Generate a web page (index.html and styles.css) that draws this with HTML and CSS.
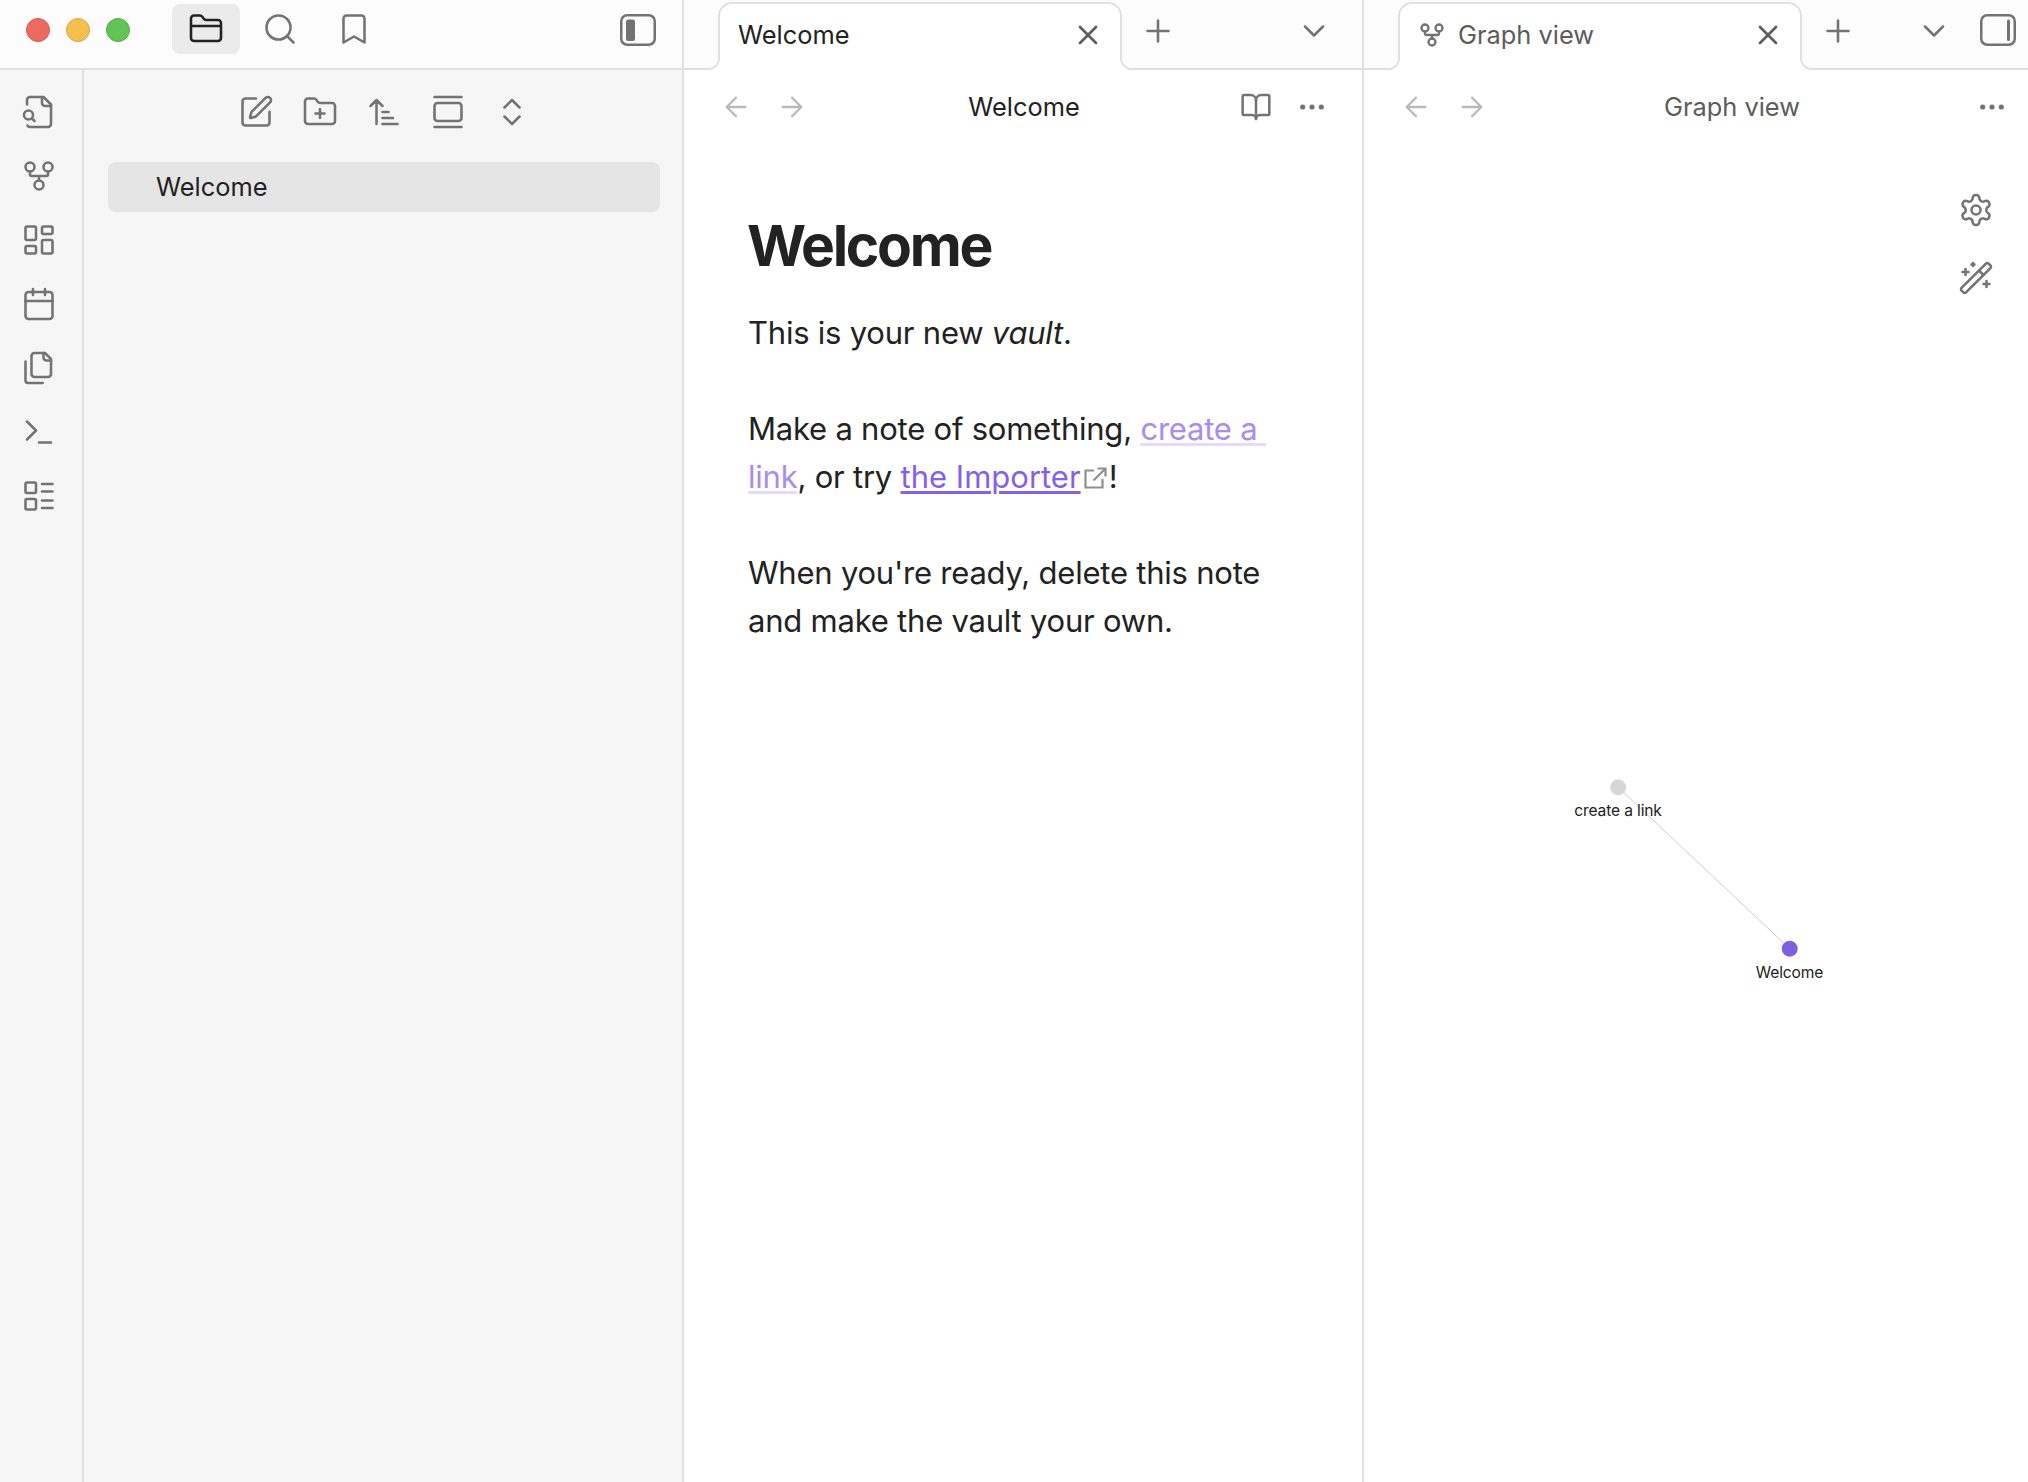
FILE: index.html
```html
<!DOCTYPE html>
<html lang="en">
<head>
    <meta charset="UTF-8">
    <title>Welcome</title>
    <link rel="stylesheet" href="styles.css">
</head>
<body>
<svg class="sprite">
    <symbol id="fork" viewBox="0 0 24 24"><circle cx="12" cy="18" r="3"/><circle cx="6" cy="6" r="3"/><circle cx="18" cy="6" r="3"/><path d="M18 9v2c0 .6-.4 1-1 1H7c-.6 0-1-.4-1-1V9M12 12v3"/></symbol>
    <symbol id="close" viewBox="0 0 24 24"><path d="M18 6 6 18M6 6l12 12"/></symbol>
    <symbol id="plus" viewBox="0 0 24 24"><path d="M5 12h14M12 5v14"/></symbol>
    <symbol id="down" viewBox="0 0 24 24"><path d="m6 9 6 6 6-6"/></symbol>
    <symbol id="back" viewBox="0 0 24 24"><path d="m12 19-7-7 7-7M19 12H5"/></symbol>
    <symbol id="forward" viewBox="0 0 24 24"><path d="M5 12h14M12 5l7 7-7 7"/></symbol>
    <symbol id="more" viewBox="0 0 24 24"><circle cx="12" cy="12" r="1"/><circle cx="19" cy="12" r="1"/><circle cx="5" cy="12" r="1"/></symbol>
</svg>

<div class="app">
    <div class="left">
        <div class="topbar">
            <div class="lights">
                <span class="light red"></span>
                <span class="light yellow"></span>
                <span class="light green"></span>
            </div>
            <div class="side-tabs">
                <div class="side-tab active">
                    <svg class="icon" viewBox="0 0 24 24"><path d="M20 20a2 2 0 0 0 2-2V8a2 2 0 0 0-2-2h-7.9a2 2 0 0 1-1.69-.9L9.6 3.9A2 2 0 0 0 7.93 3H4a2 2 0 0 0-2 2v13a2 2 0 0 0 2 2ZM2 10h20"/></svg>
                </div>
                <div class="side-tab">
                    <svg class="icon" viewBox="0 0 24 24"><circle cx="11" cy="11" r="8"/><path d="m21 21-4.3-4.3"/></svg>
                </div>
                <div class="side-tab">
                    <svg class="icon" viewBox="0 0 24 24"><path d="m19 21-7-4-7 4V5a2 2 0 0 1 2-2h10a2 2 0 0 1 2 2v16z"/></svg>
                </div>
            </div>
            <svg class="toggle" viewBox="0 0 36 32"><rect x="1.25" y="1.25" width="33.5" height="29.5" rx="6"/><rect class="fill" x="6" y="5.5" width="9" height="21.5" rx="2.5"/></svg>
        </div>
        <div class="left-body">
            <div class="ribbon">
                <svg class="icon" viewBox="0 0 24 24"><path d="M14 2v4a2 2 0 0 0 2 2h4"/><path d="M4.268 21a2 2 0 0 0 1.727 1H18a2 2 0 0 0 2-2V7l-5-5H6a2 2 0 0 0-2 2v3"/><path d="m9 18-1.5-1.5"/><circle cx="5" cy="14" r="3"/></svg>
                <svg class="icon"><use href="#fork"/></svg>
                <svg class="icon" viewBox="0 0 24 24"><rect width="7" height="9" x="3" y="3" rx="1"/><rect width="7" height="5" x="14" y="3" rx="1"/><rect width="7" height="9" x="14" y="12" rx="1"/><rect width="7" height="5" x="3" y="16" rx="1"/></svg>
                <svg class="icon" viewBox="0 0 24 24"><path d="M8 2v4M16 2v4M3 10h18"/><rect width="18" height="18" x="3" y="4" rx="2"/></svg>
                <svg class="icon" viewBox="0 0 24 24"><path d="M20 7h-3a2 2 0 0 1-2-2V2"/><path d="M9 18a2 2 0 0 1-2-2V4a2 2 0 0 1 2-2h7l4 4v10a2 2 0 0 1-2 2Z"/><path d="M3 7.6v12.8A1.6 1.6 0 0 0 4.6 22h9.8"/></svg>
                <svg class="icon" viewBox="0 0 24 24"><path d="m4 17 6-6-6-6M12 19h8"/></svg>
                <svg class="icon" viewBox="0 0 24 24"><rect width="7" height="7" x="3" y="3" rx="1"/><rect width="7" height="7" x="3" y="14" rx="1"/><path d="M14 4h7M14 9h7M14 15h7M14 20h7"/></svg>
            </div>
            <div class="explorer">
                <div class="tools">
                    <svg class="icon" viewBox="0 0 24 24"><path d="M12 3H5a2 2 0 0 0-2 2v14a2 2 0 0 0 2 2h14a2 2 0 0 0 2-2v-7"/><path d="M18.375 2.625a1 1 0 0 1 3 3l-9.013 9.014a2 2 0 0 1-.853.505l-2.873.84a.5.5 0 0 1-.62-.62l.84-2.873a2 2 0 0 1 .506-.852z"/></svg>
                    <svg class="icon" viewBox="0 0 24 24"><path d="M12 10v6M9 13h6"/><path d="M20 20a2 2 0 0 0 2-2V8a2 2 0 0 0-2-2h-7.9a2 2 0 0 1-1.69-.9L9.6 3.9A2 2 0 0 0 7.93 3H4a2 2 0 0 0-2 2v13a2 2 0 0 0 2 2Z"/></svg>
                    <svg class="icon" viewBox="0 0 24 24"><path d="m3 8 4-4 4 4M7 4v16M11 12h4M11 16h7M11 20h10"/></svg>
                    <svg class="icon" viewBox="0 0 24 24"><path d="M3 2h18M3 22h18"/><rect width="18" height="12" x="3" y="6" rx="2"/></svg>
                    <svg class="icon" viewBox="0 0 24 24"><path d="m7 15 5 5 5-5M7 9l5-5 5 5"/></svg>
                </div>
                <div class="file">Welcome</div>
            </div>
        </div>
    </div>

    <div class="pane">
        <div class="tabbar">
            <div class="tab">
                <span>Welcome</span>
                <svg class="icon small close"><use href="#close"/></svg>
            </div>
            <svg class="icon add"><use href="#plus"/></svg>
            <svg class="icon list"><use href="#down"/></svg>
        </div>
        <div class="view-header">
            <div class="nav">
                <svg class="icon small"><use href="#back"/></svg>
                <svg class="icon small"><use href="#forward"/></svg>
            </div>
            <div class="view-title">Welcome</div>
            <div class="actions">
                <svg class="icon small" viewBox="0 0 24 24"><path d="M12 7v14"/><path d="M3 18a1 1 0 0 1-1-1V4a1 1 0 0 1 1-1h5a4 4 0 0 1 4 4 4 4 0 0 1 4-4h5a1 1 0 0 1 1 1v13a1 1 0 0 1-1 1h-6a3 3 0 0 0-3 3 3 3 0 0 0-3-3z"/></svg>
                <svg class="icon small"><use href="#more"/></svg>
            </div>
        </div>
        <div class="note">
            <h1>Welcome</h1>
            <p>This is your new <em>vault</em>.</p>
            <p>Make a note of something, <a class="unresolved">create a link</a>, or try <a class="external">the Importer</a><svg class="ext" viewBox="0 0 24 24"><path d="M11 4.5H2.5v17h17V13M14.5 2.5h8v8M22 3 10.5 14.5"/></svg>!</p>
            <p>When you're ready, delete this note and make the vault your own.</p>
        </div>
    </div>

    <div class="pane graph">
        <div class="tabbar">
            <div class="tab">
                <svg class="icon tiny"><use href="#fork"/></svg>
                <span>Graph view</span>
                <svg class="icon small close"><use href="#close"/></svg>
            </div>
            <svg class="icon add"><use href="#plus"/></svg>
            <svg class="icon list"><use href="#down"/></svg>
            <svg class="toggle" viewBox="0 0 36 32"><rect x="1.25" y="1.25" width="33.5" height="29.5" rx="6"/><rect class="fill" x="27" y="5.5" width="3" height="21.5" rx="1.5"/></svg>
        </div>
        <div class="view-header">
            <div class="nav">
                <svg class="icon small"><use href="#back"/></svg>
                <svg class="icon small"><use href="#forward"/></svg>
            </div>
            <div class="view-title">Graph view</div>
            <div class="actions">
                <svg class="icon small"><use href="#more"/></svg>
            </div>
        </div>
        <div class="canvas">
            <svg class="nodes" width="664" height="1338">
                <line x1="254.2" y1="643.3" x2="425.7" y2="804.7"/>
                <circle class="ghost" cx="254.2" cy="643.3" r="8"/>
                <circle class="current" cx="425.7" cy="804.7" r="8"/>
                <text x="254" y="672">create a link</text>
                <text x="425.5" y="834">Welcome</text>
            </svg>
            <div class="controls">
                <svg class="icon" viewBox="0 0 24 24"><path d="M12.22 2h-.44a2 2 0 0 0-2 2v.18a2 2 0 0 1-1 1.73l-.43.25a2 2 0 0 1-2 0l-.15-.08a2 2 0 0 0-2.73.73l-.22.38a2 2 0 0 0 .73 2.73l.15.1a2 2 0 0 1 1 1.72v.51a2 2 0 0 1-1 1.74l-.15.09a2 2 0 0 0-.73 2.73l.22.38a2 2 0 0 0 2.73.73l.15-.08a2 2 0 0 1 2 0l.43.25a2 2 0 0 1 1 1.73V20a2 2 0 0 0 2 2h.44a2 2 0 0 0 2-2v-.18a2 2 0 0 1 1-1.73l.43-.25a2 2 0 0 1 2 0l.15.08a2 2 0 0 0 2.73-.73l.22-.39a2 2 0 0 0-.73-2.73l-.15-.08a2 2 0 0 1-1-1.74v-.5a2 2 0 0 1 1-1.74l.15-.09a2 2 0 0 0 .73-2.73l-.22-.38a2 2 0 0 0-2.73-.73l-.15.08a2 2 0 0 1-2 0l-.43-.25a2 2 0 0 1-1-1.73V4a2 2 0 0 0-2-2z"/><circle cx="12" cy="12" r="3"/></svg>
                <svg class="icon" viewBox="0 0 24 24"><path d="m21.64 3.64-1.28-1.28a1.21 1.21 0 0 0-1.72 0L2.36 18.64a1.21 1.21 0 0 0 0 1.72l1.28 1.28a1.2 1.2 0 0 0 1.72 0L21.64 5.36a1.2 1.2 0 0 0 0-1.72"/><path d="m14 7 3 3M5 6v4M19 14v4M10 2v2M7 8H3M21 16h-4M11 3H9"/></svg>
            </div>
        </div>
    </div>
</div>
</body>
</html>
```

FILE: styles.css
```css
*{
    box-sizing: border-box;
}
body{
    margin: 0;
    background: #fff;
    color: #222;
    font-family: Inter, "Liberation Sans", sans-serif;
    font-size: 25.4px;
    line-height: 30px;
    overflow: hidden;
}
.sprite{
    display: none;
}
.app{
    display: flex;
    height: 100vh;
}

/* icons */
.icon{
    width: 36px;
    height: 36px;
    flex: none;
    fill: none;
    stroke: #737373;
    stroke-width: 1.7;
    stroke-linecap: round;
    stroke-linejoin: round;
}
.icon.small{
    width: 32px;
    height: 32px;
}
.icon.tiny{
    width: 28px;
    height: 28px;
    stroke-width: 2;
}
.icon.close{
    stroke: #5c5c5c;
    stroke-width: 2;
}
.toggle{
    width: 36px;
    height: 32px;
    flex: none;
    fill: none;
    stroke: #737373;
    stroke-width: 2.5;
}
.toggle .fill{
    fill: #737373;
    stroke: none;
}

/* left sidebar */
.left{
    width: 684px;
    flex: none;
    display: flex;
    flex-direction: column;
    background: #f6f6f6;
    border-right: 2px solid #e0e0e0;
}
.topbar{
    height: 70px;
    flex: none;
    display: flex;
    align-items: flex-start;
    padding: 4px 26px 0;
    background: #fcfcfc;
    border-bottom: 2px solid #e0e0e0;
}
.lights{
    display: flex;
    gap: 16px;
    padding-top: 14px;
}
.light{
    width: 24px;
    height: 24px;
    border-radius: 50%;
    border: 1px solid;
}
.red{
    background: #ed6a5e;
    border-color: #d95950;
}
.yellow{
    background: #f5bf4f;
    border-color: #dba73f;
}
.green{
    background: #61c554;
    border-color: #52ae42;
}
.side-tabs{
    display: flex;
    gap: 6px;
    margin-left: 42px;
}
.side-tab{
    width: 68px;
    height: 50px;
    display: flex;
    align-items: center;
    justify-content: center;
    border-radius: 8px;
}
.side-tab.active{
    background: #ebebeb;
}
.side-tab.active .icon{
    stroke: #222;
}
.topbar .toggle{
    margin: 10px 0 0 auto;
}
.left-body{
    flex: 1;
    display: flex;
}
.ribbon{
    width: 84px;
    display: flex;
    flex-direction: column;
    gap: 28px;
    padding: 24px 0 0 21px;
    border-right: 2px solid #e0e0e0;
}
.explorer{
    flex: 1;
    padding: 24px 22px 0 24px;
}
.tools{
    display: flex;
    gap: 28px;
    padding-left: 130px;
}
.file{
    height: 50px;
    margin-top: 32px;
    padding-left: 48px;
    border-radius: 8px;
    background: #e5e5e5;
    line-height: 50px;
}

/* panes */
.pane{
    width: 680px;
    flex: none;
    display: flex;
    flex-direction: column;
    border-right: 2px solid #e0e0e0;
}
.tabbar{
    height: 70px;
    flex: none;
    display: flex;
    padding: 2px 30px 0 34px;
    background: #fcfcfc;
    border-bottom: 2px solid #e0e0e0;
}
.tab{
    position: relative;
    width: 404px;
    height: 68px;
    display: flex;
    align-items: center;
    padding: 0 16px 4px 18px;
    background: #fff;
    border: 2px solid #e0e0e0;
    border-bottom: none;
    border-radius: 14px 14px 0 0;
}
/* outward curves at the foot of the active tab */
.tab::before, .tab::after{
    content: "";
    position: absolute;
    bottom: 0;
    width: 12px;
    height: 12px;
}
.tab::before{
    left: -12px;
    background: radial-gradient(circle at 0 0, #fcfcfc 9.7px, #e0e0e0 10.3px 11.7px, #fff 12.3px);
}
.tab::after{
    right: -12px;
    background: radial-gradient(circle at 100% 0, #fcfcfc 9.7px, #e0e0e0 10.3px 11.7px, #fff 12.3px);
}
.tab .tiny{
    margin-right: 12px;
}
.tab .close{
    margin-left: auto;
}
.add{
    margin: 11px 0 0 18px;
}
.list{
    margin: 11px 0 0 auto;
}
.view-header{
    height: 74px;
    flex: none;
    display: flex;
    align-items: center;
    padding: 0 34px 0 36px;
}
.nav, .actions{
    display: flex;
    gap: 24px;
}
.nav .icon{
    stroke: #bababa;
}
.actions .icon{
    stroke-width: 1.9;
}
.view-title{
    flex: 1;
    text-align: center;
}

/* note */
.note{
    padding: 68px 64px 0;
    font-size: 31px;
    line-height: 48px;
    letter-spacing: -0.22px;
}
.note h1{
    margin: 0 0 29px -1px;
    font-size: 57px;
    line-height: 68px;
    letter-spacing: -2.3px;
}
.note p{
    margin: 0 0 48px;
    white-space: pre-wrap;
}
.note a{
    text-decoration: underline;
    text-decoration-thickness: 3px;
    text-underline-offset: 3px;
}
.note .unresolved{
    color: #a88bf3;
    text-decoration-color: #e3dbfd;
}
.note .external{
    color: #8560ea;
    letter-spacing: 0;
}
.ext{
    width: 24px;
    height: 24px;
    margin: 0 2px;
    vertical-align: -2px;
    fill: none;
    stroke: #8f8f8f;
    stroke-width: 2.2;
}

/* graph */
.pane.graph{
    color: #5c5c5c;
    border-right: none;
}
.graph .tabbar{
    padding-right: 28px;
}
.graph .tabbar .toggle{
    margin: 12px 0 0 28px;
}
.graph .view-header{
    padding-right: 36px;
}
.canvas{
    position: relative;
    flex: 1;
}
.nodes{
    display: block;
}
.nodes line{
    stroke: #cecece;
}
.nodes text{
    fill: #222;
    font-size: 15.6px;
    letter-spacing: -0.15px;
    text-anchor: middle;
}
.ghost{
    fill: #d6d6d6;
}
.current{
    fill: #7e5fe2;
}
.controls{
    position: absolute;
    top: 48px;
    left: 594px;
    display: flex;
    flex-direction: column;
    gap: 32px;
}
```
